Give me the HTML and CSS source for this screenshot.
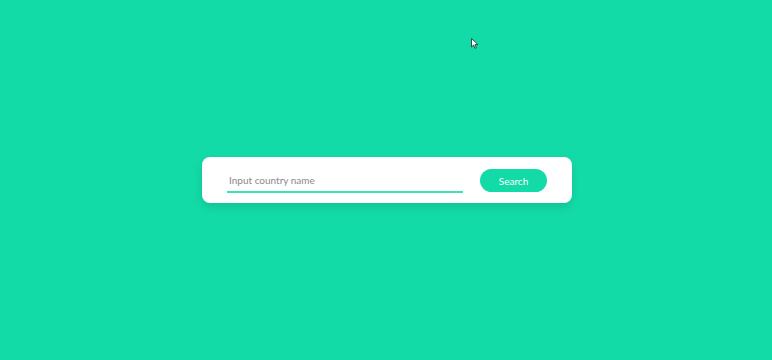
FILE: index.html
```html
<!DOCTYPE html>
<html lang="en">
  <head>
    <meta charset="UTF-8" />
    <meta name="viewport" content="width=device-width, initial-scale=1.0" />
    <title>Country Search</title>
    <link rel="stylesheet" href="styles.css">
  </head>
  <body>
    <div class="page">
      <form class="search-card" onsubmit="return false">
        <input type="text" class="search-input" placeholder="Input country name" />
        <button type="submit" class="search-btn">Search</button>
      </form>
    </div>

    <!-- mouse pointer from the capture -->
    <svg class="cursor" width="8" height="11" viewBox="0 0 8 11">
      <path d="M0.5 0.5 L0.5 9 L2.6 7 L4 10.3 L5.3 9.7 L4 6.6 L7 6.6 Z" fill="#fff" stroke="#222" stroke-width="0.8" />
    </svg>
  </body>
</html>
```

FILE: styles.css
```css
html,
body {
  margin: 0;
  height: 100%;
}
body {
  background: #13dba7;
  font-family: Lato, "Open Sans", sans-serif;
}
.page {
  height: 360px;
  display: flex;
  justify-content: center;
  align-items: flex-start;
  padding-top: 157px;
  box-sizing: border-box;
  padding-left: 2px;
}
.search-card {
  width: 370px;
  height: 46px;
  box-sizing: border-box;
  background: #fff;
  border-radius: 8px;
  box-shadow: 0 4px 10px rgba(0, 0, 0, 0.12);
  display: flex;
  align-items: center;
  padding: 0 25px 0 25px;
  gap: 17px;
}
.search-input {
  width: 236px;
  height: 25px;
  border: none;
  border-bottom: 2px solid #3ee0b5;
  outline: none;
  padding: 2px 0 0 2px;
  font-family: inherit;
  font-size: 10px;
  color: #555;
  background: transparent;
  box-sizing: border-box;
}
.search-input::placeholder {
  color: #8a8a8a;
}
.search-btn {
  width: 67px;
  height: 23px;
  border: none;
  border-radius: 12px;
  background: #13dba7;
  color: #fff;
  font-family: inherit;
  font-size: 10px;
  cursor: pointer;
  margin-top: 1px;
}
.cursor {
  position: absolute;
  left: 471px;
  top: 38px;
}
```
